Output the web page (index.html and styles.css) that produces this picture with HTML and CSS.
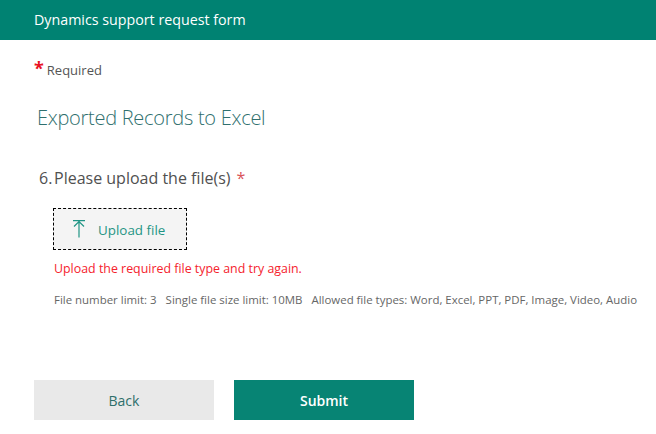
FILE: index.html
```html
<!DOCTYPE html>
<html lang="en">
<head>
<meta charset="utf-8">
<title>Dynamics support request form</title>
<link rel="stylesheet" href="styles.css">
</head>
<body>
<header class="banner">Dynamics support request form</header>
<main class="form">
  <p class="required-note"><span class="star">*</span><span>Required</span></p>
  <h1 class="section-title">Exported Records to Excel</h1>
  <div class="question">
    <span class="q-num">6.</span><span class="q-text">Please upload the file(s)</span><span class="q-star">*</span>
  </div>
  <div class="answer">
    <button class="upload" type="button">
      <svg class="upload-icon" width="12" height="18" viewBox="0 0 12 18" fill="none" stroke="#1f9484" stroke-width="1.2"><path d="M0 .6h12M6 17.500V1.500M1 6.500l5-5 5 5"/></svg>
      <span class="upload-label">Upload file</span>
    </button>
    <p class="error">Upload the required file type and try again.</p>
    <p class="limits"><span>File number limit: 3</span><span>Single file size limit: 10MB</span><span>Allowed file types: Word, Excel, PPT, PDF, Image, Video, Audio</span></p>
  </div>
  <div class="actions">
    <button class="btn back" type="button">Back</button>
    <button class="btn submit" type="button">Submit</button>
  </div>
</main>
</body>
</html>
```
FILE: styles.css
```css
* { box-sizing: border-box; }
html, body { margin: 0; padding: 0; }
body { width: 656px; height: 434px; overflow: hidden; background: #fff; font-family: "Open Sans", "Noto Sans", sans-serif; color: #333; }
.banner { height: 40px; background: #008272; color: #fff; font-size: 14.250px; line-height: 40px; padding-left: 34px; }
.form { padding: 20px 0 0 34px; }
.required-note { margin: 0; height: 20px; display: flex; align-items: center; gap: 3px; font-size: 13px; color: #555; }
.star { color: #e81123; font-size: 18px; font-weight: 700; line-height: 20px; position: relative; top: -2px; }
.section-title { margin: 24px 0 0 3px; font-size: 20px; line-height: 28px; font-weight: 300; letter-spacing: -0.270px; color: #2f6f6e; }
.question { margin: 34px 0 0 5px; font-size: 16px; line-height: 24px; color: #505050; display: flex; }
.q-num { width: 15px; }
.q-star { color: #d9545a; margin-left: 6px; }
.answer { margin: 18px 0 0 19px; }
.upload { width: 134px; height: 42px; display: flex; align-items: center; gap: 13px; padding: 0 0 0 19px; border: 1px dashed #000; background: #f4f4f4; color: #1f9484; font: 13.400px "Open Sans", sans-serif; }
.upload-label { padding-top: 1px; }
.error { margin: 10px 0 0 1px; font-size: 12.400px; line-height: 18px; color: #f5222d; }
.limits { margin: 14px 0 0 1px; font-size: 11.450px; line-height: 16px; color: #666; display: flex; gap: 9px; white-space: nowrap; }
.actions { margin-top: 72px; display: flex; gap: 20px; }
.btn { width: 180px; height: 40px; border: 0; font: 14px "Open Sans", sans-serif; }
.back { background: #e9e9e9; color: #2f6f6b; }
.submit { background: #078474; color: #fff; font-weight: 600; }
```
